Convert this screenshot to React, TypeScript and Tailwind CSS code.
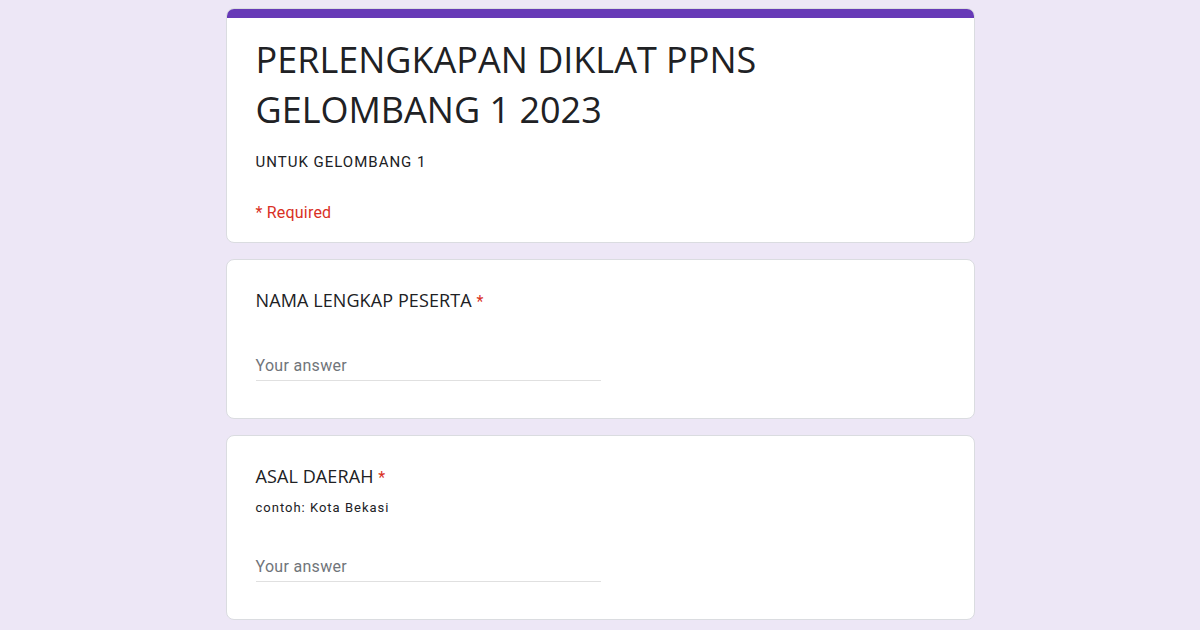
import React from 'react';

const Question: React.FC<{ label: string; hint?: string }> = ({ label, hint }) => (
  <div className="bg-white border border-[#dadce0] rounded-lg px-[29px] pt-[27px] pb-[37px]">
    <div className="text-[18px] leading-[26px] text-[#202124] tracking-[0.1px]" style={{ fontFamily: '"Open Sans", sans-serif' }}>
      {label} <span className="text-[#d93025] text-[16px]" style={{ fontFamily: 'Roboto, sans-serif' }}>*</span>
    </div>
    {hint && <div className="text-[13px] leading-[20px] mt-[7px] text-[#202124] tracking-[1px]" style={{ fontFamily: 'Roboto, sans-serif' }}>{hint}</div>}
    <div className={hint ? 'mt-[38px]' : 'mt-[40px]'}>
      <div className="w-[345px] border-b border-[#e0e0e0] pb-[3px] text-[16px] leading-[22px] text-[#70757a] tracking-[0.3px]" style={{ fontFamily: 'Roboto, sans-serif' }}>
        Your answer
      </div>
    </div>
  </div>
);

const App: React.FC = () => {
  return (
    <div className="w-[1200px] h-[630px] overflow-hidden bg-[#ede7f6]">
      <div className="w-[749px] mx-auto pt-[8px] flex flex-col gap-[16px]">
        <div className="bg-white border border-[#dadce0] rounded-lg overflow-hidden">
          <div className="h-[10px] bg-[#673ab7] -mx-px -mt-px" />
          <div className="px-[29px] pt-[17px] pb-[19px]">
            <h1 className="text-[36px] leading-[50px] text-[#202124]" style={{ fontFamily: '"Open Sans", sans-serif' }}>
              PERLENGKAPAN DIKLAT PPNS<br />GELOMBANG 1 2023
            </h1>
            <div className="mt-[17px] text-[15px] leading-[20px] text-[#202124] tracking-[1px]" style={{ fontFamily: 'Roboto, sans-serif' }}>
              UNTUK GELOMBANG 1
            </div>
            <div className="mt-[31px] text-[16px] leading-[20px] text-[#d93025] tracking-[0.2px]" style={{ fontFamily: 'Roboto, sans-serif' }}>
              * Required
            </div>
          </div>
        </div>
        <Question label="NAMA LENGKAP PESERTA" />
        <Question label="ASAL DAERAH" hint="contoh: Kota Bekasi" />
      </div>
    </div>
  );
};

export default App;
